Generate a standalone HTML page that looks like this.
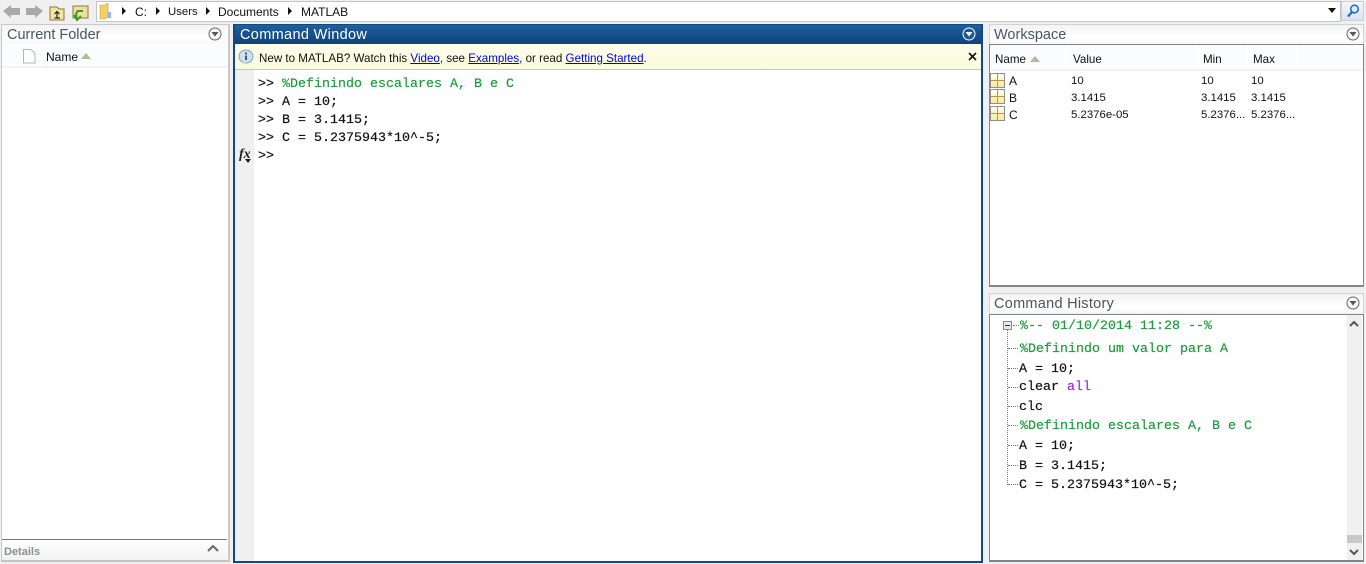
<!DOCTYPE html>
<html><head><meta charset="utf-8">
<style>
html,body{margin:0;padding:0}
body{width:1366px;height:564px;overflow:hidden;background:#f0f0f0;position:relative;font-family:"Liberation Sans",sans-serif;color:#111}
div,span.t,a.t,svg{position:absolute}
.t{white-space:nowrap;font-size:11.6px;line-height:16px;position:absolute}
.v{font-size:11.4px}
.m{font-family:"Liberation Mono",monospace;font-size:13.33px;line-height:16px;white-space:pre;position:absolute;color:#111;-webkit-text-stroke:.2px currentColor}
.g{color:#1e9a3c}
.title{font-size:14.5px;line-height:20px;color:#4a5564;white-space:nowrap;position:absolute}
.tb{background:linear-gradient(#f2f2f2,#fff 12px,#f7f7f7);}
a{color:#0000e0;text-decoration:underline}
.hc{background:#fbfcfe;position:absolute;top:0;height:22px}
.cell{background:linear-gradient(#fffef0,#fbe89a);border:1px solid #8c8f92;width:13px;height:13px;left:990px;position:absolute}
.cell:before{content:"";position:absolute;left:6px;top:0;bottom:0;width:1px;background:#b19a45}
.cell:after{content:"";position:absolute;top:6px;left:0;right:0;height:1px;background:#b19a45}
.dot{position:absolute;border-top:1px dotted #777;height:0;left:1008px}
</style></head><body>

<!-- toolbar -->
<svg style="left:2px;top:2px" width="92" height="20" viewBox="0 0 92 20">
<path d="M1 9 L9 3 V6 H18 V13 H9 V16 Z" fill="#a9a9a9"/>
<path d="M41 9 L33 3 V6 H24 V13 H33 V16 Z" fill="#a9a9a9"/>
<path d="M48 5 H55 L57 7 H62 V18 H48 Z" fill="#f7e3a2" stroke="#8a7a3e"/>
<path d="M55 16 V10 M52.5 12 L55 9.5 L57.5 12 M52.5 16 H58" fill="none" stroke="#222" stroke-width="1.2"/>
<path d="M71 4 H86 V16 H71 Z" fill="#f1dda0" stroke="#8a7a3e"/>
<path d="M81 9 L76 9 Q73 11 75 17 M72 13 L75 18 L79 14" fill="none" stroke="#3f9a2b" stroke-width="2"/>
</svg>
<div style="left:96px;top:1px;width:1243px;height:19px;background:#fff;border:1px solid #c4c4c4"></div>
<svg style="left:99px;top:3px" width="16" height="17" viewBox="0 0 16 17">
<path d="M1 2 H6 L9 0 V14 L6 16 H1 Z" fill="#f4cf63" stroke="#c9a23c" stroke-width=".6"/><rect x="9" y="9" width="3" height="6" fill="#8fb7e6"/>
</svg>
<svg style="left:120px;top:6px" width="200" height="11" viewBox="0 0 200 11">
<path d="M2 1 L6 5 L2 9Z M36 1 L40 5 L36 9Z M86 1 L90 5 L86 9Z M168 1 L172 5 L168 9Z" fill="#111"/>
</svg>
<span class="t" style="left:135px;top:4px;font-size:12px">C:</span>
<span class="t" style="left:168px;top:4px;font-size:11.4px">Users</span>
<span class="t" style="left:218px;top:4px;font-size:12px">Documents</span>
<span class="t" style="left:301px;top:4px;font-size:12px">MATLAB</span>
<svg style="left:1328px;top:8px" width="10" height="6"><path d="M0 0H8L4 5Z" fill="#111"/></svg>
<div style="left:1341px;top:1px;width:23px;height:20px;background:linear-gradient(#f4f7fb,#d9e3f2);border:1px solid #c9d0da;box-sizing:border-box"></div>
<svg style="left:1345px;top:3px" width="16" height="16" viewBox="0 0 16 16"><circle cx="9.5" cy="6" r="3.8" fill="#dcecfa" stroke="#2a6fb5" stroke-width="1.6"/><path d="M7 9 L3 13.5" stroke="#2a6fb5" stroke-width="2.4"/></svg>

<!-- Current Folder -->
<div style="left:1px;top:24px;width:226px;height:535px;background:#fff;border:1px solid #c9c9c9;border-right:2px solid #c9c9c9;border-bottom:2px solid #c4c4c4"></div>
<div class="tb" style="left:2px;top:25px;width:225px;height:19px"></div>
<span class="title" style="left:7px;top:25px">Current Folder</span>
<div style="left:2px;top:44px;width:225px;height:24px;background:#fff;border-bottom:0">
 <div class="hc" style="left:0;width:38px;background:#fbfcfe"></div>
 <div class="hc" style="left:40px;width:185px"></div>
 <div style="left:0;top:22px;width:225px;height:2px;background:#edf2fb"></div>
</div>
<svg style="left:23px;top:49px" width="13" height="15"><path d="M.5 .5 H8 L12 4.5 V14 H.5 Z" fill="#fff" stroke="#b4b4b4"/></svg>
<span class="t" style="left:46px;top:49px;font-size:12px">Name</span>
<svg style="left:81px;top:53px" width="11" height="7"><path d="M0 6 L5 0 L10 6Z" fill="#b7b7a0"/></svg>
<div style="left:2px;top:539px;width:225px;height:1px;background:#777"></div>
<div style="left:2px;top:540px;width:225px;height:20px;background:linear-gradient(#fff,#f2f2f2)"></div>
<span class="t" style="left:4px;top:544px;font-size:11px;font-weight:bold;color:#8a8f96">Details</span>
<svg style="left:207px;top:544px" width="13" height="9"><path d="M1 7 L6 2 L11 7" fill="none" stroke="#666" stroke-width="2"/></svg>

<!-- Command Window -->
<div style="left:233px;top:24px;width:746px;height:536px;background:#fff;border:2px solid #12497f;border-top:1px solid #12497f"></div>
<div style="left:235px;top:25px;width:746px;height:19px;background:linear-gradient(#1f5f9e,#0f4279)"></div>
<span class="title" style="left:240px;top:25px;color:#fff;letter-spacing:.34px">Command Window</span>
<div style="left:235px;top:44px;width:746px;height:26px;border-bottom:1px solid #c8c8b4;box-sizing:border-box;background:linear-gradient(#fdfdec,#fbfbdc)"></div>
<svg style="left:238px;top:49px" width="17" height="17" viewBox="0 0 17 17"><ellipse cx="8" cy="7.5" rx="7" ry="6.5" fill="#cfe0ef" stroke="#8a9fb5"/><path d="M5 13 L4 16 L8 14Z" fill="#cfe0ef"/><rect x="7" y="6.5" width="2" height="4.5" fill="#2a5f95"/><rect x="7" y="3.5" width="2" height="2" fill="#2a5f95"/></svg>
<span class="t" style="left:259px;top:51px">New to MATLAB? Watch this <a href="#">Video</a>, see <a href="#">Examples</a>, or read <a href="#">Getting Started</a>.</span>
<svg style="left:968px;top:52px" width="10" height="10"><path d="M1 1 L8 8 M8 1 L1 8" stroke="#111" stroke-width="1.6" fill="none"/></svg>
<div style="left:235px;top:70px;width:19px;height:491px;background:#f0f0f0"></div>
<span class="m" style="left:258px;top:77px">&gt;&gt; <span class="g">%Definindo escalares A, B e C</span></span>
<span class="m" style="left:258px;top:95px">&gt;&gt; A = 10;</span>
<span class="m" style="left:258px;top:113px">&gt;&gt; B = 3.1415;</span>
<span class="m" style="left:258px;top:131px">&gt;&gt; C = 5.2375943*10^-5;</span>
<span class="m" style="left:258px;top:149px">&gt;&gt;</span>
<span class="t" style="left:239px;top:147px;font-family:'Liberation Serif',serif;font-style:italic;font-weight:bold;font-size:14px;color:#222">fx</span>
<svg style="left:245px;top:159px" width="7" height="5"><path d="M0 0H6L3 4Z" fill="#222"/></svg>

<!-- Workspace -->
<div style="left:989px;top:24px;box-sizing:border-box;width:375px;height:263px;background:#f0f0f0;border:1px solid #d2d2d2"></div>
<div class="tb" style="left:990px;top:25px;width:373px;height:19px"></div>
<span class="title" style="left:994px;top:25px">Workspace</span>
<div style="left:989px;top:44px;width:373px;height:240px;background:#fff;border:1px solid #80858c;border-bottom:2px solid #80858c"></div>
<div style="left:990px;top:45px;width:373px;height:24px">
 <div class="hc" style="left:0;width:76px;height:24px"></div>
 <div class="hc" style="left:78px;width:128px;height:24px"></div>
 <div class="hc" style="left:208px;width:48px;height:24px"></div>
 <div class="hc" style="left:258px;width:48px;height:24px"></div>
 <div class="hc" style="left:308px;width:65px;height:24px"></div>
</div>
<div style="left:990px;top:69px;width:373px;height:2px;background:#edf2fb"></div>
<span class="t" style="left:995px;top:52px">Name</span>
<svg style="left:1030px;top:56px" width="11" height="7"><path d="M0 6 L5 0 L10 6Z" fill="#b7b7a0"/></svg>
<span class="t" style="left:1073px;top:52px">Value</span>
<span class="t" style="left:1203px;top:52px">Min</span>
<span class="t" style="left:1253px;top:52px">Max</span>
<div class="cell" style="top:73px"></div><div class="cell" style="top:89px"></div><div class="cell" style="top:106px"></div>
<span class="t" style="left:1009px;top:73px;font-size:12px">A</span><span class="t v" style="left:1071px;top:73px">10</span><span class="t v" style="left:1201px;top:73px">10</span><span class="t v" style="left:1251px;top:73px">10</span>
<span class="t" style="left:1009px;top:90px;font-size:12px">B</span><span class="t v" style="left:1071px;top:90px">3.1415</span><span class="t v" style="left:1201px;top:90px">3.1415</span><span class="t v" style="left:1251px;top:90px">3.1415</span>
<span class="t" style="left:1009px;top:107px;font-size:12px">C</span><span class="t v" style="left:1071px;top:107px">5.2376e-05</span><span class="t v" style="left:1201px;top:107px">5.2376...</span><span class="t v" style="left:1251px;top:107px">5.2376...</span>

<!-- History -->
<div style="left:989px;top:293px;width:375px;height:268px;background:#f0f0f0;border:1px solid #d2d2d2;box-sizing:border-box"></div>
<div class="tb" style="left:990px;top:294px;width:373px;height:19px"></div>
<span class="title" style="left:994px;top:294px;letter-spacing:.27px">Command History</span>
<div style="left:989px;top:314px;width:373px;height:245px;background:#fff;border:1px solid #80858c;border-bottom:2px solid #80858c"></div>
<div style="left:1347px;top:315px;width:15px;height:245px;background:#f0f0f0"></div>
<div style="left:1347px;top:535px;width:15px;height:8px;background:#c8c8c8"></div>
<svg style="left:1349px;top:320px" width="11" height="8"><path d="M1 6 L5 2 L9 6" fill="none" stroke="#555" stroke-width="2"/></svg>
<svg style="left:1349px;top:548px" width="11" height="8"><path d="M1 2 L5 6 L9 2" fill="none" stroke="#555" stroke-width="2"/></svg>
<div style="left:1003px;top:321px;width:7px;height:7px;background:#e8e8e8;border:1px solid #8a8a8a"></div>
<div style="left:1005px;top:325px;width:5px;height:1px;background:#333"></div>
<div style="left:1007px;top:330px;height:155px;width:0;border-left:1px dotted #777"></div>
<div class="dot" style="left:1013px;top:325px;width:6px"></div>
<div class="dot" style="top:348px;width:10px"></div>
<div class="dot" style="top:368px;width:10px"></div>
<div class="dot" style="top:387px;width:10px"></div>
<div class="dot" style="top:406px;width:10px"></div>
<div class="dot" style="top:425px;width:10px"></div>
<div class="dot" style="top:445px;width:10px"></div>
<div class="dot" style="top:465px;width:10px"></div>
<div class="dot" style="top:484px;width:10px"></div>
<span class="m g" style="left:1020px;top:319px;color:#1e9a3c">%-- 01/10/2014 11:28 --%</span>
<span class="m g" style="left:1020px;top:342px;color:#1e9a3c">%Definindo um valor para A</span>
<span class="m" style="left:1019px;top:362px">A = 10;</span>
<span class="m" style="left:1019px;top:380px">clear <span style="color:#a020f0">all</span></span>
<span class="m" style="left:1019px;top:400px">clc</span>
<span class="m g" style="left:1020px;top:419px;color:#1e9a3c">%Definindo escalares A, B e C</span>
<span class="m" style="left:1019px;top:439px">A = 10;</span>
<span class="m" style="left:1019px;top:459px">B = 3.1415;</span>
<span class="m" style="left:1019px;top:478px">C = 5.2375943*10^-5;</span>

<!-- panel menu icons -->
<svg style="left:208px;top:27px" width="14" height="14"><circle cx="7" cy="7" r="6" fill="#f6f6f6" stroke="#666"/><path d="M3.5 5H10.5L7 9.5Z" fill="#555"/></svg>
<svg style="left:962px;top:27px" width="14" height="14"><circle cx="7" cy="7" r="6" fill="#1b5a98" stroke="#fff"/><path d="M3.5 5H10.5L7 9.5Z" fill="#fff"/></svg>
<svg style="left:1346px;top:27px" width="14" height="14"><circle cx="7" cy="7" r="6" fill="#f6f6f6" stroke="#666"/><path d="M3.5 5H10.5L7 9.5Z" fill="#555"/></svg>
<svg style="left:1346px;top:296px" width="14" height="14"><circle cx="7" cy="7" r="6" fill="#f6f6f6" stroke="#666"/><path d="M3.5 5H10.5L7 9.5Z" fill="#555"/></svg>
</body></html>
